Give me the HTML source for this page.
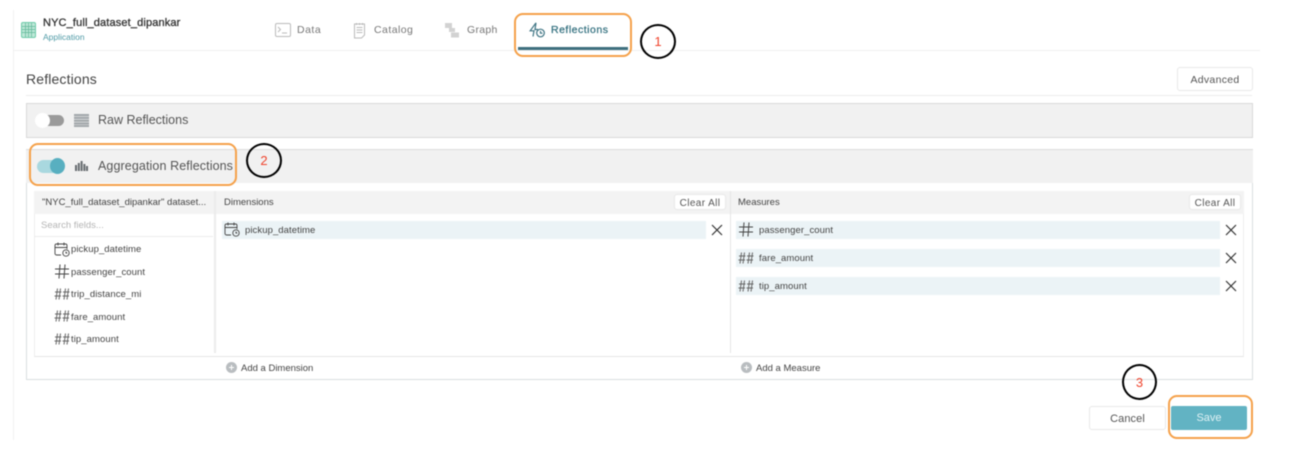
<!DOCTYPE html>
<html>
<head>
<meta charset="utf-8">
<title>Reflections</title>
<style>
html,body{margin:0;padding:0;background:#fff;}
#p{position:relative;width:1292px;height:454px;overflow:hidden;background:#fff;font-family:"Liberation Sans",sans-serif;color:#333;filter:blur(.4px);}
#p div,#p svg{position:absolute;}
.t{white-space:nowrap;line-height:14px;}
.btn{background:#fff;border:1px solid #e8e8e8;border-radius:3px;box-sizing:border-box;text-align:center;color:#555;white-space:nowrap;}
.chip{background:#ebf3f6;height:18px;}
.f{font-size:9.5px;color:#444;letter-spacing:.08px;}
.o{border:2px solid #f5a14a;box-sizing:border-box;border-radius:9px;}
.c{border:2px solid #000;border-radius:50%;box-sizing:border-box;color:#f0432c;text-align:center;font-size:13px;}
</style>
</head>
<body>
<div id="p">
<div style="left:13px;top:10px;width:1px;height:430px;background:#f2f2f2"></div>
<div style="left:13px;top:50px;width:1247px;height:1px;background:#f0f0f0"></div>

<svg style="left:21px;top:22px" width="15" height="16" viewBox="0 0 15 16"><rect x=".5" y=".5" width="14" height="15" rx="1.5" fill="#bfe8d8" stroke="#6fcbaa"/><path d="M1 4.500H14M1 7.500H14M1 10.500H14M4.500 1V15M7.500 1V15M10.500 1V15" stroke="#5fb697" stroke-width=".7"/></svg>
<div class="t" style="left:43px;top:16px;font-size:11px;color:#333;letter-spacing:.14px;-webkit-text-stroke:.3px #333">NYC_full_dataset_dipankar</div>
<div class="t" style="left:43px;top:30px;font-size:8.500px;color:#4f9aa6">Application</div>

<svg style="left:275px;top:23px" width="16" height="14" viewBox="0 0 16 14" fill="none" stroke="#bbb"><rect x=".5" y=".5" width="15" height="13" rx="1.500"/><path d="M3 4l2.500 2.500L3 9M7 10h5"/></svg>
<div class="t" style="left:297px;top:23px;font-size:10.500px;color:#777;letter-spacing:.5px">Data</div>
<svg style="left:353px;top:22px" width="13" height="17" viewBox="0 0 13 17" fill="none" stroke="#bbb"><path d="M1.500 2h10v11l-3 3h-7z"/><path d="M3.500 5.500h6M3.500 8h6M3.500 10.500h6M3.500 1v2M6.500 1v2M9.500 1v2"/></svg>
<div class="t" style="left:374px;top:23px;font-size:10.500px;color:#777;letter-spacing:.45px">Catalog</div>
<svg style="left:445px;top:22px" width="16" height="16" viewBox="0 0 16 16" fill="#d2d2d2"><rect x="0" y="1" width="7" height="5"/><rect x="4" y="6" width="6" height="4"/><rect x="6" y="10.500" width="8" height="5"/></svg>
<div class="t" style="left:467px;top:23px;font-size:10.500px;color:#777;letter-spacing:.3px">Graph</div>
<svg style="left:529px;top:22px" width="17" height="17" viewBox="0 0 17 17" fill="none" stroke="#3e7483" stroke-width="1.200"><path d="M7 .8L1.200 8.800h3.800L4 14.500M7 .8L6 7.500h3"/><circle cx="11.500" cy="11" r="3.800"/><path d="M11.500 9v2.200h2"/></svg>
<div class="t" style="left:551px;top:23px;font-size:10.500px;color:#33707f;letter-spacing:.5px;-webkit-text-stroke:.25px #33707f">Reflections</div>
<div style="left:518px;top:47px;width:110px;height:3px;background:#3e6f7e"></div>
<div class="o" style="left:514px;top:13px;width:118px;height:44px"></div>
<div class="c" style="left:640px;top:24px;width:36px;height:35px;line-height:32px">1</div>

<div class="t" style="left:26px;top:72px;font-size:14px;color:#444;letter-spacing:.15px">Reflections</div>
<div class="btn" style="left:1177px;top:67px;width:76px;height:24px;line-height:23px;padding-top:1px;font-size:10.500px;letter-spacing:.3px">Advanced</div>
<div style="left:26px;top:95px;width:1226px;height:1px;background:#ececec"></div>

<div style="left:26px;top:103px;width:1227px;height:35px;background:#f1f1f1;border:1px solid #d9d9d9;box-sizing:border-box"></div>
<div style="left:40px;top:115px;width:24px;height:11px;border-radius:6px;background:#9a9a9a"></div>
<div style="left:35px;top:113px;width:15px;height:15px;border-radius:50%;background:#fff"></div>
<svg style="left:74px;top:114px" width="15" height="13" viewBox="0 0 15 13" fill="#a3a8ab"><rect width="15" height="2.200"/><rect y="2.800" width="15" height="2.200"/><rect y="5.600" width="15" height="2.200"/><rect y="8.400" width="15" height="2.200"/><rect y="11" width="15" height="2"/></svg>
<div class="t" style="left:98px;top:113px;font-size:12.500px;color:#555">Raw Reflections</div>

<div style="left:26px;top:149px;width:1227px;height:231px;background:#fff;border:1px solid #d9dfe0;box-sizing:border-box"></div>
<div style="left:26px;top:149px;width:1227px;height:34px;background:#f1f1f1;border-top:1px solid #ddd;box-sizing:border-box"></div>
<div style="left:37px;top:160px;width:25px;height:13px;border-radius:7px;background:#a9d8df"></div>
<div style="left:50px;top:158px;width:15px;height:16px;border-radius:50%;background:#58afc0"></div>
<svg style="left:75px;top:161px" width="13" height="10" viewBox="0 0 13 10" fill="#666b6f"><rect x="0" y="4" width="2" height="6"/><rect x="2.800" y="2" width="2" height="8"/><rect x="5.600" y="0" width="2" height="10"/><rect x="8.400" y="3" width="2" height="7"/><rect x="11" y="5" width="2" height="5"/></svg>
<div class="t" style="left:98px;top:159px;font-size:12.500px;color:#555;letter-spacing:.1px">Aggregation Reflections</div>
<div class="o" style="left:29px;top:143px;width:208px;height:43px"></div>
<div class="c" style="left:246px;top:143px;width:36px;height:35px;line-height:31px">2</div>

<div style="left:34px;top:191px;width:1210px;height:166px;border-bottom:1px solid #e6e6e6;border-right:1px solid #eee;border-left:1px solid #eee;box-sizing:border-box"></div>
<div style="left:34px;top:191px;width:1210px;height:23px;background:#f3f3f3"></div>
<div style="left:214px;top:191px;width:2px;height:162px;background:#ebebeb"></div>
<div style="left:730px;top:191px;width:1px;height:162px;background:#e5e5e5"></div>
<div style="left:35px;top:236px;width:178px;height:1px;background:#ececec"></div>

<div class="t" style="left:42px;top:196px;font-size:9.500px;color:#444">"NYC_full_dataset_dipankar" dataset...</div>
<div class="t" style="left:224px;top:196px;font-size:9.500px;color:#444">Dimensions</div>
<div class="btn" style="left:674px;top:194px;width:52px;height:16px;line-height:15px;padding-top:1px;font-size:10px;letter-spacing:.4px">Clear All</div>
<div class="t" style="left:738px;top:196px;font-size:9.500px;color:#444">Measures</div>
<div class="btn" style="left:1189px;top:194px;width:52px;height:16px;line-height:15px;padding-top:1px;font-size:10px;letter-spacing:.4px">Clear All</div>
<div class="t" style="left:41px;top:219px;font-size:9.500px;color:#b5b5b5">Search fields...</div>

<svg style="left:54px;top:242px" width="16" height="15" viewBox="0 0 16 15" fill="none" stroke="#444" stroke-width=".9"><path d="M7 13H2.500a1.500 1.500 0 0 1-1.500-1.500V3.500A1.500 1.500 0 0 1 2.500 2h9A1.500 1.500 0 0 1 13 3.500V7M1 5.500h12M4 .5v3M10 .5v3"/><circle cx="12" cy="11" r="3.200" fill="#fff"/><path d="M12 9.500V11h1.300"/></svg>
<div class="t f" style="left:71px;top:243px">pickup_datetime</div>
<svg style="left:54px;top:264px" width="16" height="15" viewBox="0 0 16 15" fill="none" stroke="#444"><path d="M6 .5L5 14.500M11 .5L10 14.500M1 5h14M1 10h14"/></svg>
<div class="t f" style="left:71px;top:266px">passenger_count</div>
<svg style="left:54px;top:288px" width="16" height="12" viewBox="0 0 16 12" fill="none" stroke="#666" stroke-width="1"><path d="M3.500 .5L2 11.500M6.500 .5L5 11.500M1 4h6.500M.5 8h6.500M11.500 .5L10 11.500M14.500 .5L13 11.500M9 4h6.500M8.500 8h6.500"/></svg>
<div class="t f" style="left:71px;top:288px">trip_distance_mi</div>
<svg style="left:54px;top:310px" width="16" height="12" viewBox="0 0 16 12" fill="none" stroke="#666" stroke-width="1"><path d="M3.500 .5L2 11.500M6.500 .5L5 11.500M1 4h6.500M.5 8h6.500M11.500 .5L10 11.500M14.500 .5L13 11.500M9 4h6.500M8.500 8h6.500"/></svg>
<div class="t f" style="left:71px;top:311px">fare_amount</div>
<svg style="left:54px;top:333px" width="16" height="12" viewBox="0 0 16 12" fill="none" stroke="#666" stroke-width="1"><path d="M3.500 .5L2 11.500M6.500 .5L5 11.500M1 4h6.500M.5 8h6.500M11.500 .5L10 11.500M14.500 .5L13 11.500M9 4h6.500M8.500 8h6.500"/></svg>
<div class="t f" style="left:71px;top:333px">tip_amount</div>

<div class="chip" style="left:222px;top:221px;width:484px"></div>
<svg style="left:224px;top:222px" width="16" height="15" viewBox="0 0 16 15" fill="none" stroke="#444" stroke-width=".9"><path d="M7 13H2.500a1.500 1.500 0 0 1-1.500-1.500V3.500A1.500 1.500 0 0 1 2.500 2h9A1.500 1.500 0 0 1 13 3.500V7M1 5.500h12M4 .5v3M10 .5v3"/><circle cx="12" cy="11" r="3.200" fill="#ebf3f6"/><path d="M12 9.500V11h1.300"/></svg>
<div class="t f" style="left:245px;top:224px">pickup_datetime</div>
<svg style="left:711px;top:224px" width="12" height="12" viewBox="0 0 12 12" stroke="#333" stroke-width="1.200"><path d="M1 1l10 10M11 1L1 11"/></svg>

<div class="chip" style="left:736px;top:221px;width:484px"></div>
<svg style="left:738px;top:222px" width="16" height="15" viewBox="0 0 16 15" fill="none" stroke="#444"><path d="M6 .5L5 14.500M11 .5L10 14.500M1 5h14M1 10h14"/></svg>
<div class="t f" style="left:759px;top:224px">passenger_count</div>
<svg style="left:1225px;top:224px" width="12" height="12" viewBox="0 0 12 12" stroke="#333" stroke-width="1.200"><path d="M1 1l10 10M11 1L1 11"/></svg>

<div class="chip" style="left:736px;top:249px;width:484px"></div>
<svg style="left:738px;top:252px" width="16" height="12" viewBox="0 0 16 12" fill="none" stroke="#666" stroke-width="1"><path d="M3.500 .5L2 11.500M6.500 .5L5 11.500M1 4h6.500M.5 8h6.500M11.500 .5L10 11.500M14.500 .5L13 11.500M9 4h6.500M8.500 8h6.500"/></svg>
<div class="t f" style="left:759px;top:252px">fare_amount</div>
<svg style="left:1225px;top:252px" width="12" height="12" viewBox="0 0 12 12" stroke="#333" stroke-width="1.200"><path d="M1 1l10 10M11 1L1 11"/></svg>

<div class="chip" style="left:736px;top:277px;width:484px"></div>
<svg style="left:738px;top:280px" width="16" height="12" viewBox="0 0 16 12" fill="none" stroke="#666" stroke-width="1"><path d="M3.500 .5L2 11.500M6.500 .5L5 11.500M1 4h6.500M.5 8h6.500M11.500 .5L10 11.500M14.500 .5L13 11.500M9 4h6.500M8.500 8h6.500"/></svg>
<div class="t f" style="left:759px;top:280px">tip_amount</div>
<svg style="left:1225px;top:280px" width="12" height="12" viewBox="0 0 12 12" stroke="#333" stroke-width="1.200"><path d="M1 1l10 10M11 1L1 11"/></svg>

<svg style="left:226px;top:362px" width="11" height="11" viewBox="0 0 11 11"><circle cx="5.500" cy="5.500" r="5.500" fill="#b9bdc0"/><path d="M5.500 3v5M3 5.500h5" stroke="#fff"/></svg>
<div class="t f" style="left:241px;top:362px;letter-spacing:0">Add a Dimension</div>
<svg style="left:741px;top:362px" width="11" height="11" viewBox="0 0 11 11"><circle cx="5.500" cy="5.500" r="5.500" fill="#b9bdc0"/><path d="M5.500 3v5M3 5.500h5" stroke="#fff"/></svg>
<div class="t f" style="left:756px;top:362px;letter-spacing:0">Add a Measure</div>

<div class="c" style="left:1122px;top:364px;width:35px;height:36px;line-height:33px">3</div>
<div class="btn" style="left:1089px;top:406px;width:77px;height:24px;line-height:23px;padding-top:1px;font-size:11px;letter-spacing:.1px">Cancel</div>
<div style="left:1171px;top:406px;width:76px;height:24px;line-height:25px;background:#62b3c3;border-radius:2px;color:#dff1f4;text-align:center;font-size:11px">Save</div>
<div class="o" style="left:1168px;top:395px;width:85px;height:44px"></div>
</div>
</body>
</html>
